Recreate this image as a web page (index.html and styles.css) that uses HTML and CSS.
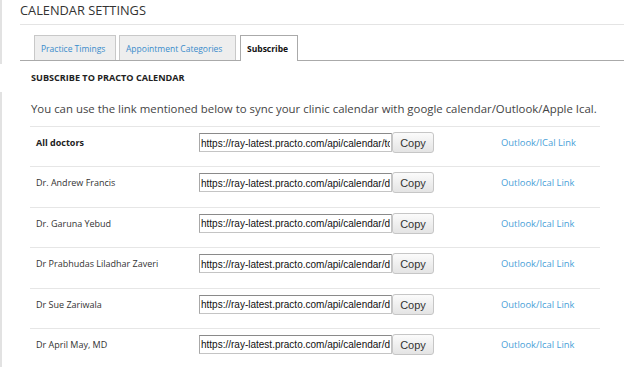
FILE: index.html
```html
<!DOCTYPE html>
<html>
<head>
<meta charset="utf-8">
<link rel="stylesheet" href="styles.css">
</head>
<body>
<div class="top">
  <h1 class="title">CALENDAR SETTINGS</h1>
  <ul class="tabs">
    <li class="tab t1">Practice Timings</li>
    <li class="tab t2">Appointment Categories</li>
    <li class="tab active">Subscribe</li>
  </ul>
</div>
<h2 class="heading">SUBSCRIBE TO PRACTO CALENDAR</h2>
<div class="content">
  <p class="intro">You can use the link mentioned below to sync your clinic calendar with google calendar/Outlook/Apple Ical.</p>
  <div class="table">
    <div class="row">
      <div class="name bold">All doctors</div>
      <div class="field"><input class="url" type="text" value="https://ray-latest.practo.com/api/calendar/token/all"><button class="copy">Copy</button></div>
      <a class="link">Outlook/ICal Link</a>
    </div>
    <div class="row">
      <div class="name">Dr. Andrew Francis</div>
      <div class="field"><input class="url" type="text" value="https://ray-latest.practo.com/api/calendar/doctor/1"><button class="copy">Copy</button></div>
      <a class="link">Outlook/Ical Link</a>
    </div>
    <div class="row">
      <div class="name">Dr. Garuna Yebud</div>
      <div class="field"><input class="url" type="text" value="https://ray-latest.practo.com/api/calendar/doctor/2"><button class="copy">Copy</button></div>
      <a class="link">Outlook/Ical Link</a>
    </div>
    <div class="row">
      <div class="name">Dr Prabhudas Liladhar Zaveri</div>
      <div class="field"><input class="url" type="text" value="https://ray-latest.practo.com/api/calendar/doctor/3"><button class="copy">Copy</button></div>
      <a class="link">Outlook/Ical Link</a>
    </div>
    <div class="row">
      <div class="name">Dr Sue Zariwala</div>
      <div class="field"><input class="url" type="text" value="https://ray-latest.practo.com/api/calendar/doctor/4"><button class="copy">Copy</button></div>
      <a class="link">Outlook/Ical Link</a>
    </div>
    <div class="row">
      <div class="name">Dr April May, MD</div>
      <div class="field"><input class="url" type="text" value="https://ray-latest.practo.com/api/calendar/doctor/5"><button class="copy">Copy</button></div>
      <a class="link">Outlook/Ical Link</a>
    </div>
  </div>
</div>
</body>
</html>
```
FILE: styles.css
```css
html, body {
  margin: 0;
  padding: 0;
  background: #fff;
  font-family: "Open Sans", "Noto Sans", sans-serif;
  color: #333;
  overflow: hidden;
}
.top {
  border-left: 2px solid #e2e2e2;
  padding-left: 18px;
  height: 64px;
}
.title {
  margin: 0;
  height: 24px;
  font-size: 12.8px;
  font-weight: normal;
  line-height: 21px;
  color: #333;
  border-bottom: 1px solid #e4e4e4;
}
.tabs {
  list-style: none;
  margin: 10px 0 0;
  padding: 0 0 0 14px;
  display: flex;
  border-bottom: 1px solid #aaa;
  height: 25px;
}
.tab {
  box-sizing: border-box;
  height: 25px;
  padding: 1px 0 0 6px;
  background: #eee;
  border: 1px solid #c8c8c8;
  border-bottom: none;
  font-size: 8.5px;
  line-height: 23px;
  color: #3a8ccb;
  white-space: nowrap;
}
.t1 { width: 82px; margin-right: 3px; }
.t2 { width: 117px; margin-right: 4px; }
.tab.active {
  width: 58px;
  height: 26px;
  background: #fff;
  border-color: #aaa;
  color: #111;
  font-weight: bold;
}
.heading {
  margin: 0;
  padding: 7px 0 0 31px;
  height: 21px;
  font-size: 9.1px;
  font-weight: bold;
  line-height: 14px;
  color: #222;
}
.content {
  border-left: 2px solid #e2e2e2;
  padding: 0 24px 0 28px;
}
.intro {
  margin: 0;
  padding: 8px 0 0 1px;
  height: 26px;
  font-size: 11.4px;
  line-height: 18px;
  color: #444;
  white-space: nowrap;
}
.table {
  width: 570px;
}
.row {
  display: grid;
  grid-template-columns: 169px 302px auto;
  height: 40.4px;
  box-sizing: border-box;
  border-top: 1px solid #e6e6e6;
  padding-top: 5px;
  align-items: start;
}
.name {
  padding: 4px 0 0 6px;
  font-size: 9px;
  line-height: 14px;
  color: #333;
}
.name.bold { font-weight: bold; color: #222; }
.field {
  display: flex;
  align-items: flex-start;
}
.url {
  box-sizing: border-box;
  width: 193px;
  height: 19px;
  margin: 1px 0 0;
  padding: 1px 1px 0;
  border: 1px solid #c4c4c4;
  border-top-color: #8a8a8a;
  border-left-color: #a8a8a8;
  font-family: "Liberation Sans", Arial, sans-serif;
  font-size: 10px;
  color: #111;
  background: #fff;
  outline: none;
}
.copy {
  box-sizing: border-box;
  width: 42px;
  height: 21px;
  margin: 0;
  padding: 1px 0 0;
  border: 1px solid #c6c6c6;
  border-radius: 3px;
  background: linear-gradient(#fbfbfb, #e4e4e4);
  font-family: "Liberation Sans", Arial, sans-serif;
  font-size: 11px;
  color: #333;
}
.link {
  padding-top: 4px;
  font-size: 9.4px;
  line-height: 14px;
  color: #4a9fd8;
}
```
